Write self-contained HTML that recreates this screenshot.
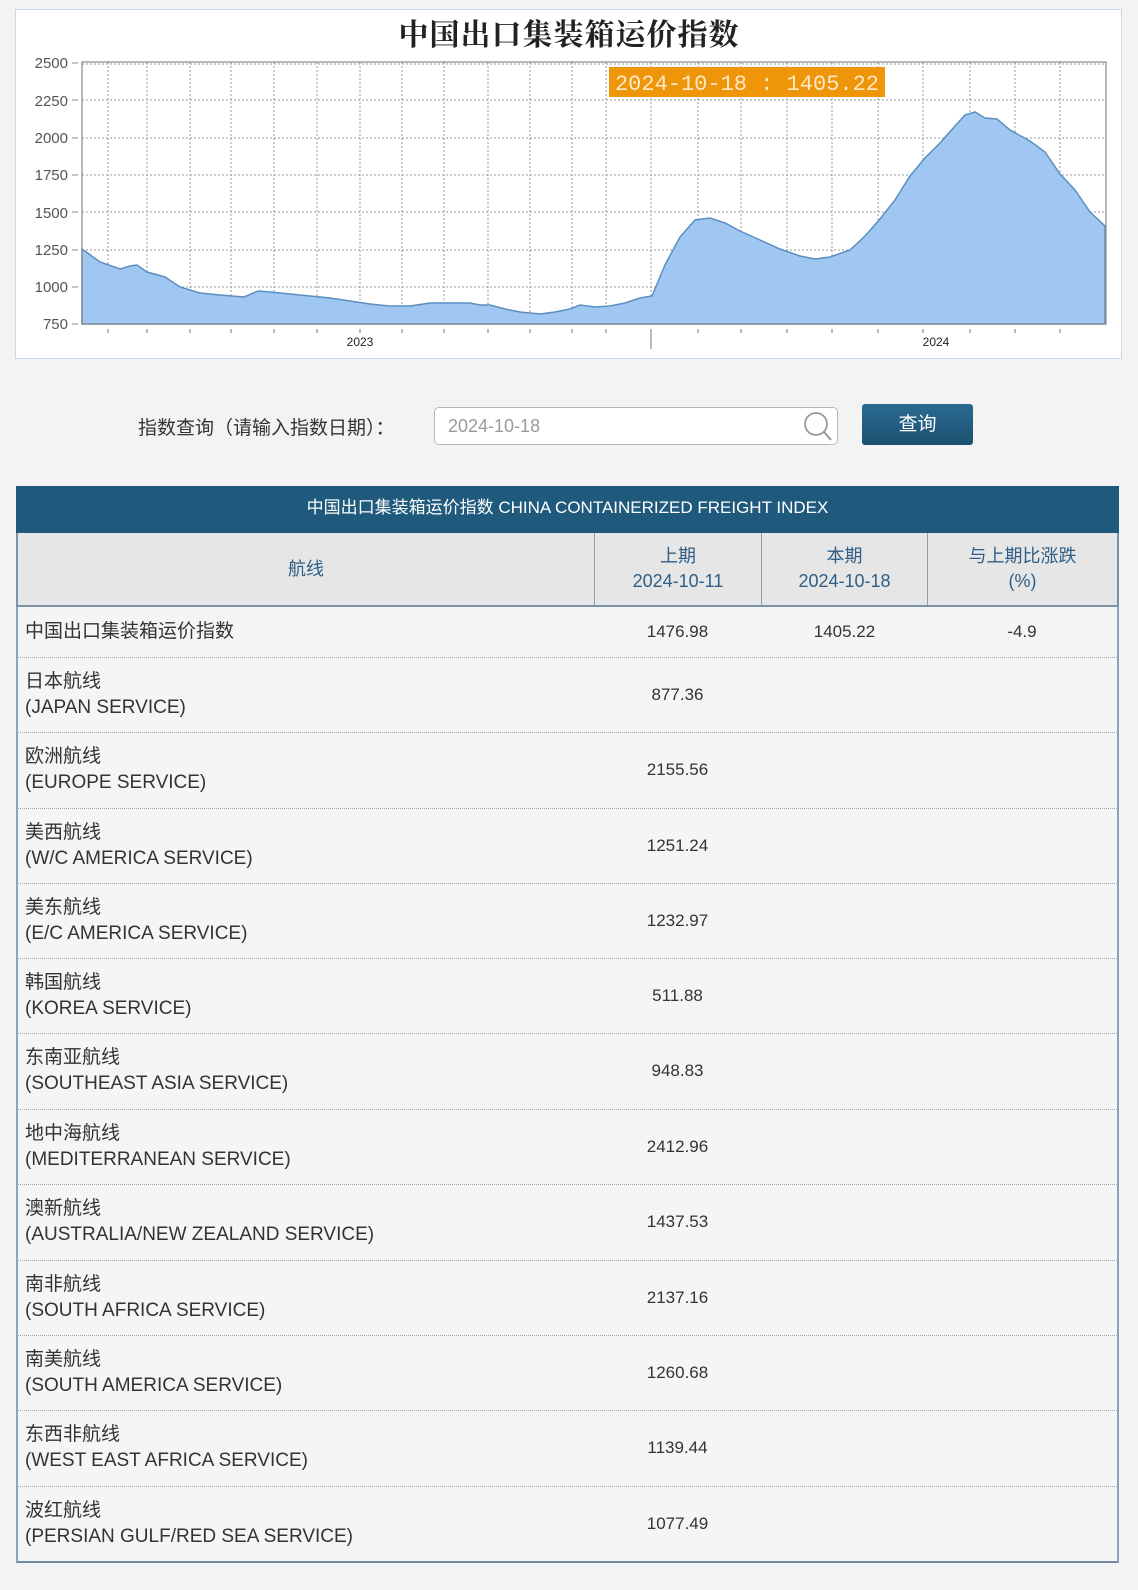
<!DOCTYPE html>
<html><head><meta charset="utf-8"><style>
*{margin:0;padding:0;box-sizing:border-box}
body{width:1138px;height:1590px;background:#f3f3f3;font-family:"Liberation Sans","Noto Sans CJK SC",sans-serif;position:relative;overflow:hidden;color:#333}
.abs{position:absolute}
.chart{left:15px;top:9px;width:1107px;height:350px;background:#fff;border:1px solid #c9d9e8}
.title{left:0;width:1138px;top:10px;text-align:center;font-family:"Noto Serif CJK SC",serif;font-size:30px;font-weight:bold;color:#222;letter-spacing:1px}
.q{top:413px;left:138px;font-size:19px;color:#333}
.inp{left:434px;top:407px;width:404px;height:38px;background:#fff;border:1px solid #b8b8b8;border-radius:5px;font-size:18px;color:#9a9a9a;padding:8px 13px}
.btn{left:862px;top:404px;width:111px;height:41px;background:linear-gradient(#2a6b91,#1b4f70);border-radius:3px;color:#fff;font-size:19px;text-align:center;line-height:41px}
.th{left:16px;top:486px;width:1103px;height:47px;background:#1f5a7c;color:#fff;font-size:17px;text-align:center;line-height:44px}
.hd{left:16px;top:533px;width:1103px;height:74px;background:#e6e6e6;border:2px solid #7a93a8;border-top:none;}
.hc{position:absolute;top:0;height:72px;color:#2f5f86;font-size:18px;text-align:center;display:flex;align-items:center;justify-content:center;line-height:25px}
.tb{left:16px;top:607px;width:1103px;height:956px;background:#f5f5f5;border-left:2px solid #8aa4bc;border-right:2px solid #8aa4bc;border-bottom:2px solid #6f8aa0}
.row{position:absolute;left:0;width:1099px;border-bottom:1px dotted #9aa6b0}
.nm{position:absolute;left:7px;font-size:19px;line-height:26px;color:#333}
.v{position:absolute;font-size:17px;color:#333;text-align:center;width:167px}
</style></head><body>
<div class="abs chart"></div>
<div class="abs title">中国出口集装箱运价指数</div>
<svg class="abs" style="left:0;top:0" width="1138" height="360">
<g fill="#555" font-size="15" font-family="Liberation Sans" text-anchor="end">
<text x="68" y="68">2500</text><text x="68" y="106">2250</text><text x="68" y="143">2000</text><text x="68" y="180">1750</text><text x="68" y="218">1500</text><text x="68" y="255">1250</text><text x="68" y="292">1000</text><text x="68" y="329">750</text>
</g>
<g stroke="#888" stroke-width="1"><line x1="72" y1="63" x2="78" y2="63"/><line x1="72" y1="100" x2="78" y2="100"/><line x1="72" y1="138" x2="78" y2="138"/><line x1="72" y1="175" x2="78" y2="175"/><line x1="72" y1="212" x2="78" y2="212"/><line x1="72" y1="250" x2="78" y2="250"/><line x1="72" y1="287" x2="78" y2="287"/><line x1="72" y1="324" x2="78" y2="324"/></g>
<g stroke="#999" stroke-dasharray="2,2" stroke-width="1">
<line x1="82" y1="100" x2="1106" y2="100"/><line x1="82" y1="138" x2="1106" y2="138"/><line x1="82" y1="175" x2="1106" y2="175"/><line x1="82" y1="212" x2="1106" y2="212"/><line x1="82" y1="250" x2="1106" y2="250"/><line x1="82" y1="287" x2="1106" y2="287"/><line x1="82" y1="64" x2="1106" y2="64"/>
<line x1="108" y1="62" x2="108" y2="324"/><line x1="147" y1="62" x2="147" y2="324"/><line x1="190" y1="62" x2="190" y2="324"/><line x1="231" y1="62" x2="231" y2="324"/><line x1="274" y1="62" x2="274" y2="324"/><line x1="317" y1="62" x2="317" y2="324"/><line x1="360" y1="62" x2="360" y2="324"/><line x1="402" y1="62" x2="402" y2="324"/><line x1="444" y1="62" x2="444" y2="324"/><line x1="488" y1="62" x2="488" y2="324"/><line x1="530" y1="62" x2="530" y2="324"/><line x1="572" y1="62" x2="572" y2="324"/><line x1="606" y1="62" x2="606" y2="324"/><line x1="651" y1="62" x2="651" y2="324"/><line x1="698" y1="62" x2="698" y2="324"/><line x1="741" y1="62" x2="741" y2="324"/><line x1="787" y1="62" x2="787" y2="324"/><line x1="832" y1="62" x2="832" y2="324"/><line x1="878" y1="62" x2="878" y2="324"/><line x1="923" y1="62" x2="923" y2="324"/><line x1="970" y1="62" x2="970" y2="324"/><line x1="1015" y1="62" x2="1015" y2="324"/><line x1="1060" y1="62" x2="1060" y2="324"/>
</g>
<path d="M82,249 L100,262 L120,269 L130,266 L137,265 L147,272 L165,277 L180,287 L200,293 L220,295 L244,297 L258,291 L270,292 L290,294 L310,296 L330,298 L350,301 L370,304 L390,306 L410,306 L430,303 L450,303 L470,303 L480,305 L490,305 L505,309 L520,312 L540,314 L555,312 L570,309 L580,305 L595,307 L610,306 L625,303 L640,298 L652,296 L665,265 L680,237 L695,220 L710,218 L725,223 L740,231 L760,240 L780,249 L800,256 L815,259 L830,257 L850,250 L865,236 L880,219 L895,200 L910,176 L925,158 L940,143 L955,126 L965,115 L975,112 L985,118 L997,119 L1010,130 L1030,141 L1045,152 L1060,174 L1075,190 L1090,212 L1105,226 L1105,324 L82,324 Z" fill="#a0c6f2" stroke="#5a8fbf" stroke-width="1.5"/>
<rect x="82" y="62" width="1024" height="262" fill="none" stroke="#8a8a8a" stroke-width="1.2"/>
<g stroke="#777"><line x1="108" y1="329" x2="108" y2="333"/><line x1="147" y1="329" x2="147" y2="333"/><line x1="190" y1="329" x2="190" y2="333"/><line x1="231" y1="329" x2="231" y2="333"/><line x1="274" y1="329" x2="274" y2="333"/><line x1="317" y1="329" x2="317" y2="333"/><line x1="360" y1="329" x2="360" y2="333"/><line x1="402" y1="329" x2="402" y2="333"/><line x1="444" y1="329" x2="444" y2="333"/><line x1="488" y1="329" x2="488" y2="333"/><line x1="530" y1="329" x2="530" y2="333"/><line x1="572" y1="329" x2="572" y2="333"/><line x1="606" y1="329" x2="606" y2="333"/><line x1="651" y1="329" x2="651" y2="349"/><line x1="698" y1="329" x2="698" y2="333"/><line x1="741" y1="329" x2="741" y2="333"/><line x1="787" y1="329" x2="787" y2="333"/><line x1="832" y1="329" x2="832" y2="333"/><line x1="878" y1="329" x2="878" y2="333"/><line x1="923" y1="329" x2="923" y2="333"/><line x1="970" y1="329" x2="970" y2="333"/><line x1="1015" y1="329" x2="1015" y2="333"/><line x1="1060" y1="329" x2="1060" y2="333"/></g>
<text x="360" y="346" font-size="12" text-anchor="middle" fill="#222" font-family="Liberation Sans">2023</text>
<text x="936" y="346" font-size="12" text-anchor="middle" fill="#222" font-family="Liberation Sans">2024</text>
<rect x="609" y="67" width="276" height="30" fill="#ef950a"/>
<text x="747" y="90" font-size="22" text-anchor="middle" fill="#fde9c5" font-family="Liberation Mono">2024-10-18 : 1405.22</text>
</svg>
<div class="abs q">指数查询（请输入指数日期）：</div>
<div class="abs inp">2024-10-18</div>
<svg class="abs" style="left:800px;top:409px" width="36" height="34"><circle cx="16" cy="15" r="11" fill="none" stroke="#999" stroke-width="1.8"/><line x1="24" y1="23" x2="31" y2="31" stroke="#999" stroke-width="2"/></svg>
<div class="abs btn">查询</div>
<div class="abs th">中国出口集装箱运价指数 CHINA CONTAINERIZED FREIGHT INDEX</div>
<div class="abs hd">
<div class="hc" style="left:0;width:576px;">航线</div>
<div class="hc" style="left:576px;width:167px;border-left:1px solid #8aa0b4">上期<br>2024-10-11</div>
<div class="hc" style="left:743px;width:166px;border-left:1px solid #8aa0b4">本期<br>2024-10-18</div>
<div class="hc" style="left:909px;width:190px;border-left:1px solid #8aa0b4">与上期比涨跌<br>(%)</div>
</div>
<div class="abs tb">
<div class="row" style="top:0;height:51px"><div class="nm" style="top:12px">中国出口集装箱运价指数</div><div class="v" style="left:576px;top:15px">1476.98</div><div class="v" style="left:743px;top:15px">1405.22</div><div class="v" style="left:909px;width:190px;top:15px">-4.9</div></div>
<div class="row" style="top:51px;height:75px"><div class="nm" style="top:11px">日本航线<br>(JAPAN SERVICE)</div><div class="v" style="left:576px;top:27px">877.36</div></div>
<div class="row" style="top:126px;height:76px"><div class="nm" style="top:11px">欧洲航线<br>(EUROPE SERVICE)</div><div class="v" style="left:576px;top:27px">2155.56</div></div>
<div class="row" style="top:202px;height:75px"><div class="nm" style="top:11px">美西航线<br>(W/C AMERICA SERVICE)</div><div class="v" style="left:576px;top:27px">1251.24</div></div>
<div class="row" style="top:277px;height:75px"><div class="nm" style="top:11px">美东航线<br>(E/C AMERICA SERVICE)</div><div class="v" style="left:576px;top:27px">1232.97</div></div>
<div class="row" style="top:352px;height:75px"><div class="nm" style="top:11px">韩国航线<br>(KOREA SERVICE)</div><div class="v" style="left:576px;top:27px">511.88</div></div>
<div class="row" style="top:427px;height:76px"><div class="nm" style="top:11px">东南亚航线<br>(SOUTHEAST ASIA SERVICE)</div><div class="v" style="left:576px;top:27px">948.83</div></div>
<div class="row" style="top:503px;height:75px"><div class="nm" style="top:11px">地中海航线<br>(MEDITERRANEAN SERVICE)</div><div class="v" style="left:576px;top:27px">2412.96</div></div>
<div class="row" style="top:578px;height:76px"><div class="nm" style="top:11px">澳新航线<br>(AUSTRALIA/NEW ZEALAND SERVICE)</div><div class="v" style="left:576px;top:27px">1437.53</div></div>
<div class="row" style="top:654px;height:75px"><div class="nm" style="top:11px">南非航线<br>(SOUTH AFRICA SERVICE)</div><div class="v" style="left:576px;top:27px">2137.16</div></div>
<div class="row" style="top:729px;height:75px"><div class="nm" style="top:11px">南美航线<br>(SOUTH AMERICA SERVICE)</div><div class="v" style="left:576px;top:27px">1260.68</div></div>
<div class="row" style="top:804px;height:76px"><div class="nm" style="top:11px">东西非航线<br>(WEST EAST AFRICA SERVICE)</div><div class="v" style="left:576px;top:27px">1139.44</div></div>
<div class="row" style="top:880px;height:74px;border-bottom:none"><div class="nm" style="top:11px">波红航线<br>(PERSIAN GULF/RED SEA SERVICE)</div><div class="v" style="left:576px;top:27px">1077.49</div></div>
</div>
</body></html>
